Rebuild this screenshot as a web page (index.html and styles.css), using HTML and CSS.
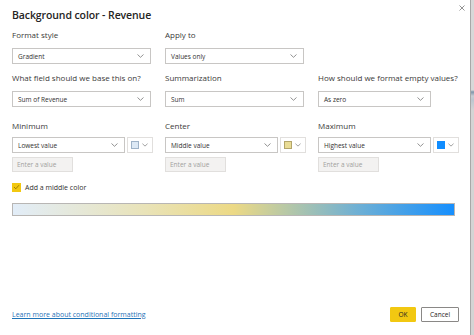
FILE: index.html
```html
<!DOCTYPE html>
<html>
<head>
<meta charset="utf-8">
<link rel="stylesheet" href="styles.css">
</head>
<body>
<div class="page">
  <div class="dialog">
    <div class="head">
      <h1 class="title">Background color - Revenue</h1>
      <span class="close">
        <svg width="6" height="6" viewBox="0 0 6 6"><path d="M0.5 0.5 L5.5 5.5 M5.5 0.5 L0.5 5.5" stroke="#777" stroke-width="0.8"/></svg>
      </span>
    </div>

    <div class="grid3 row1">
      <div class="field">
        <div class="label">Format style</div>
        <div class="select"><span>Gradient</span><svg class="chev" width="7" height="4" viewBox="0 0 7 4"><path d="M0.5 0.5 L3.5 3.3 L6.5 0.5" fill="none" stroke="#777" stroke-width="0.8"/></svg></div>
      </div>
      <div class="field">
        <div class="label">Apply to</div>
        <div class="select"><span>Values only</span><svg class="chev" width="7" height="4" viewBox="0 0 7 4"><path d="M0.5 0.5 L3.5 3.3 L6.5 0.5" fill="none" stroke="#777" stroke-width="0.8"/></svg></div>
      </div>
      <div></div>
    </div>

    <div class="grid3 row2">
      <div class="field">
        <div class="label">What field should we base this on?</div>
        <div class="select"><span>Sum of Revenue</span><svg class="chev" width="7" height="4" viewBox="0 0 7 4"><path d="M0.5 0.5 L3.5 3.3 L6.5 0.5" fill="none" stroke="#777" stroke-width="0.8"/></svg></div>
      </div>
      <div class="field">
        <div class="label">Summarization</div>
        <div class="select"><span>Sum</span><svg class="chev" width="7" height="4" viewBox="0 0 7 4"><path d="M0.5 0.5 L3.5 3.3 L6.5 0.5" fill="none" stroke="#777" stroke-width="0.8"/></svg></div>
      </div>
      <div class="field">
        <div class="label">How should we format empty values?</div>
        <div class="select narrow"><span>As zero</span><svg class="chev" width="7" height="4" viewBox="0 0 7 4"><path d="M0.5 0.5 L3.5 3.3 L6.5 0.5" fill="none" stroke="#777" stroke-width="0.8"/></svg></div>
      </div>
    </div>

    <div class="grid3 row3">
      <div class="field">
        <div class="label">Minimum</div>
        <div class="pair">
          <div class="select sel-short"><span>Lowest value</span><svg class="chev" width="7" height="4" viewBox="0 0 7 4"><path d="M0.5 0.5 L3.5 3.3 L6.5 0.5" fill="none" stroke="#777" stroke-width="0.8"/></svg></div>
          <div class="picker"><span class="swatch sw-min"></span><svg class="chev" width="6" height="4" viewBox="0 0 7 4"><path d="M0.5 0.5 L3.5 3.3 L6.5 0.5" fill="none" stroke="#777" stroke-width="0.8"/></svg></div>
        </div>
        <div class="input">Enter a value</div>
      </div>
      <div class="field">
        <div class="label">Center</div>
        <div class="pair">
          <div class="select sel-short"><span>Middle value</span><svg class="chev" width="7" height="4" viewBox="0 0 7 4"><path d="M0.5 0.5 L3.5 3.3 L6.5 0.5" fill="none" stroke="#777" stroke-width="0.8"/></svg></div>
          <div class="picker"><span class="swatch sw-mid"></span><svg class="chev" width="6" height="4" viewBox="0 0 7 4"><path d="M0.5 0.5 L3.5 3.3 L6.5 0.5" fill="none" stroke="#777" stroke-width="0.8"/></svg></div>
        </div>
        <div class="input">Enter a value</div>
      </div>
      <div class="field">
        <div class="label">Maximum</div>
        <div class="pair">
          <div class="select sel-short"><span>Highest value</span><svg class="chev" width="7" height="4" viewBox="0 0 7 4"><path d="M0.5 0.5 L3.5 3.3 L6.5 0.5" fill="none" stroke="#777" stroke-width="0.8"/></svg></div>
          <div class="picker"><span class="swatch sw-max"></span><svg class="chev" width="6" height="4" viewBox="0 0 7 4"><path d="M0.5 0.5 L3.5 3.3 L6.5 0.5" fill="none" stroke="#777" stroke-width="0.8"/></svg></div>
        </div>
        <div class="input">Enter a value</div>
      </div>
    </div>

    <div class="check">
      <span class="box"><svg width="7" height="6" viewBox="0 0 7 6"><path d="M1 3 L2.8 4.8 L6 1.2" fill="none" stroke="#8a6d00" stroke-width="0.8"/></svg></span>
      <span class="check-label">Add a middle color</span>
    </div>

    <div class="gradient"></div>

    <div class="spacer"></div>

    <div class="footer">
      <a class="link" href="#">Learn more about conditional formatting</a>
      <div class="buttons">
        <button class="btn ok">OK</button>
        <button class="btn cancel">Cancel</button>
      </div>
    </div>
  </div>
  <div class="side"></div>
</div>
</body>
</html>
```

FILE: styles.css
```css
* { box-sizing: border-box; }
html, body { margin: 0; padding: 0; }
body {
  width: 474px;
  height: 335px;
  overflow: hidden;
  font-family: "Open Sans", "Noto Sans", sans-serif;
  color: #333;
  background: #fff;
}
.page {
  display: flex;
  width: 474px;
  height: 335px;
}
.dialog {
  width: 471px;
  height: 335px;
  border-right: 1px solid #a8a8a8;
  background: #fff;
  padding: 0 0 0 12px;
  display: flex;
  flex-direction: column;
}
.side {
  flex: 1;
  background: linear-gradient(#d8d8d8 0, #d8d8d8 90px, #7f95aa 92px, #c9ced4 96px, #bcc6cf 100px, #d4d4d4 110px, #d4d4d4 335px);
}
.head {
  display: flex;
  justify-content: space-between;
  align-items: flex-start;
  height: 29px;
}
.title {
  margin: 8px 0 0 0;
  font-size: 10.5px;
  font-weight: 600;
  color: #252423;
  line-height: 14px;
  letter-spacing: -0.1px;
}
.close {
  margin: 5px 5px 0 0;
  display: flex;
}
.grid3 {
  display: grid;
  grid-template-columns: 139px 139px 139px;
  column-gap: 14px;
}
.row1 { margin-top: 0; }
.row2 { margin-top: 8px; }
.row3 { margin-top: 13px; }
.field {
  display: flex;
  flex-direction: column;
}
.label {
  font-size: 8px;
  line-height: 11px;
  color: #3b3a39;
  height: 11px;
  margin-bottom: 8px;
  white-space: nowrap;
}
.row3 .label { margin-bottom: 6px; }
.select {
  height: 16px;
  border: 1px solid #c8c6c4;
  display: flex;
  align-items: center;
  justify-content: space-between;
  padding: 0 6px 0 5px;
  font-size: 6.5px;
  color: #323130;
  background: #fff;
}
.select.narrow { width: 113px; }
.chev { flex: none; }
.pair {
  display: flex;
  gap: 2px;
  width: 141px;
}
.sel-short { width: 113px; flex: none; }
.picker {
  width: 26px;
  height: 16px;
  border: 1px solid #e1dfdd;
  display: flex;
  align-items: center;
  justify-content: space-between;
  padding: 0 4px 0 3px;
}
.swatch {
  width: 8px;
  height: 8px;
  display: block;
}
.sw-min { background: #dde9f5; border: 1px solid #9fb3c8; }
.sw-mid { background: #e9dc95; border: 1px solid #b3a56a; }
.sw-max { background: #118dff; }
.input {
  margin-top: 4px;
  width: 61px;
  height: 15px;
  background: #f3f2f1;
  border: 1px solid #e1dfdd;
  font-size: 6.5px;
  color: #a19f9d;
  display: flex;
  align-items: center;
  padding-left: 4px;
}
.check {
  margin-top: 10px;
  display: flex;
  align-items: center;
  gap: 4px;
  height: 10px;
}
.box {
  width: 9px;
  height: 9px;
  background: #f2c811;
  display: flex;
  align-items: center;
  justify-content: center;
}
.check-label {
  font-size: 7px;
  color: #323130;
}
.gradient {
  margin-top: 11px;
  width: 443px;
  height: 13px;
  border: 1px solid #b8b6b4;
  background: linear-gradient(90deg, #e2edf8 0%, #e9e3b8 30%, #ecd985 50%, #b7c8a6 62%, #6fb0d4 78%, #168ffe 100%);
}
.spacer { flex: 1; }
.footer {
  display: flex;
  justify-content: space-between;
  align-items: center;
  padding-right: 11px;
  margin-bottom: 13px;
}
.link {
  font-size: 7px;
  color: #1f73b7;
  text-decoration: underline;
}
.buttons {
  display: flex;
  gap: 5px;
}
.btn {
  height: 15px;
  font-family: "Open Sans", "Noto Sans", sans-serif;
  font-size: 6.5px;
  padding: 0;
  border-radius: 1px;
  cursor: pointer;
}
.ok {
  width: 26px;
  background: #f2c811;
  border: 1px solid #f2c811;
  color: #252423;
}
.cancel {
  width: 38px;
  background: #fff;
  border: 1px solid #8a8886;
  color: #252423;
}
```
